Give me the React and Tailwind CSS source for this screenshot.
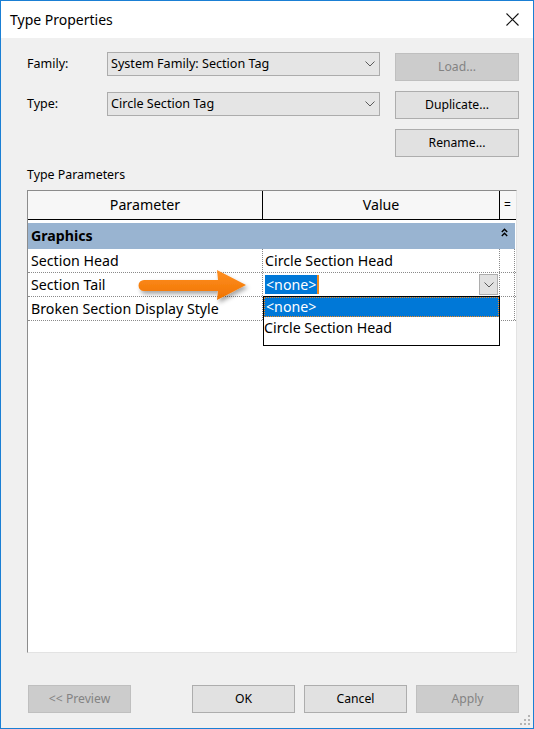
import React from "react";

function Chevron({ className = "" }) {
  return (
    <svg width="10" height="6" viewBox="0 0 10 6" className={className}>
      <path d="M0.5 0.5 L5 5 L9.5 0.5" fill="none" stroke="#5a5a5a" strokeWidth="1" />
    </svg>
  );
}

function Combo({ text, className = "" }) {
  return (
    <div
      className={
        "w-[273px] h-[24px] bg-[#e5e5e5] border border-[#acacac] flex items-center justify-between pl-[3px] pr-[4px] text-[12.6px] " +
        className
      }
    >
      <span>{text}</span>
      <Chevron />
    </div>
  );
}

function Btn({ children, disabled, className = "" }) {
  return (
    <div
      className={
        "h-[28px] border flex items-center justify-center text-[12.2px] " +
        (disabled
          ? "bg-[#cccccc] border-[#bfbfbf] text-[#838383] "
          : "bg-[#e1e1e1] border-[#adadad] text-black ") +
        className
      }
    >
      {children}
    </div>
  );
}

function Row({ name, children }) {
  return (
    <div className="h-[24px] flex border-b border-dotted border-[#8a8a8a] text-[14.2px]">
      <div className="w-[235px] border-r border-dotted border-[#8a8a8a] flex items-center pl-[3px]">
        {name}
      </div>
      <div className="w-[237px] border-r border-dotted border-[#8a8a8a] flex items-center pl-[2px] relative">
        {children}
      </div>
      <div className="w-[15px] border-r border-dotted border-[#8a8a8a]"></div>
    </div>
  );
}

export default function App() {
  return (
    <div className="w-[534px] h-[729px] border border-[#1a7fd4] bg-[#f0f0f0] flex flex-col relative font-['Noto_Sans',sans-serif] text-black overflow-hidden">
      {/* Title bar */}
      <div className="h-[37px] bg-white flex items-center justify-between pl-[9px] pr-[14px] shrink-0">
        <span className="text-[14px] leading-none">Type Properties</span>
        <svg width="13" height="13" viewBox="0 0 13 13">
          <path d="M0.5 0.5 L12.5 12.5 M12.5 0.5 L0.5 12.5" stroke="#111" strokeWidth="1.1" />
        </svg>
      </div>

      {/* Body */}
      <div className="flex-1 flex flex-col pl-[26px] pr-[14px] pt-[14px]">
        <div className="flex items-start h-[29px]">
          <div className="w-[80px] h-[24px] flex items-center text-[12.5px]">Family:</div>
          <Combo text="System Family: Section Tag" />
          <Btn disabled className="w-[124px] ml-[15px] mt-[1px]">Load...</Btn>
        </div>
        <div className="flex items-start h-[28px] mt-[10px]">
          <div className="w-[80px] h-[24px] mt-[1px] flex items-center text-[12.5px]">Type:</div>
          <Combo text="Circle Section Tag" className="mt-[1px]" />
          <Btn className="w-[124px] ml-[15px]">Duplicate...</Btn>
        </div>
        <div className="flex justify-end h-[28px] mt-[10px]">
          <Btn className="w-[124px]">Rename...</Btn>
        </div>
        <div className="mt-[10px] h-[16px] leading-[16px] text-[12.4px]">Type Parameters</div>

        {/* Table */}
        <div className="mt-[7px] w-[490px] h-[463px] border border-t-[#8c8c8c] border-l-[#8c8c8c] border-r-[#e3e3e3] border-b-[#e3e3e3] bg-white relative shrink-0">
          <div className="h-[29px] flex border-b border-black bg-[#f7f7f7] text-[14.2px]">
            <div className="w-[235px] border-r border-black flex items-center justify-center">Parameter</div>
            <div className="w-[237px] border-r border-black flex items-center justify-center">Value</div>
            <div className="w-[15px] flex items-center justify-center text-[12px]">=</div>
          </div>
          <div className="h-[3px]"></div>
          <div className="h-[26px] w-[487px] bg-[#99b4d1] flex items-center justify-between pl-[3px] pr-[7px]">
            <span className="text-[14.2px] font-bold">Graphics</span>
            <svg width="7" height="9" viewBox="0 0 7 9" className="-mt-[8px]">
              <path d="M0.8 4 L3.5 1.3 L6.2 4 M0.8 8 L3.5 5.3 L6.2 8" fill="none" stroke="#000" strokeWidth="1.4" />
            </svg>
          </div>
          <Row name="Section Head">Circle Section Head</Row>
          <Row name="Section Tail">
            <span className="h-[19px] flex items-center bg-[#0078d7] text-white pl-[1px] pr-[1px] border-r-2 border-[#f28a1e]">
              &lt;none&gt;
            </span>
            <div className="absolute right-[1px] top-[1px] w-[19px] h-[21px] bg-[#e1e1e1] border border-[#adadad] flex items-center justify-center">
              <Chevron />
            </div>
          </Row>
          <Row name="Broken Section Display Style"></Row>

          {/* Dropdown list */}
          <div className="absolute left-[235px] top-[105px] w-[237px] h-[50px] bg-white border border-black text-[14.2px]">
            <div className="h-[20px] bg-[#0078d7] text-white flex items-center pl-[1px] border border-dotted border-[#f28a1e]">
              &lt;none&gt;
            </div>
            <div className="h-[21px] flex items-center">Circle Section Head</div>
          </div>

          {/* Arrow */}
          <svg width="125" height="44" viewBox="0 0 125 44" className="absolute left-[102px] top-[71px] overflow-visible">
            <defs>
              <linearGradient id="og" x1="0" y1="0" x2="0" y2="1">
                <stop offset="0" stopColor="#ff9022" />
                <stop offset="1" stopColor="#f07300" />
              </linearGradient>
              <filter id="sh" x="-20%" y="-40%" width="140%" height="180%">
                <feDropShadow dx="2" dy="3" stdDeviation="2" floodColor="#000" floodOpacity="0.35" />
              </filter>
            </defs>
            <path
              d="M14 18 L88 18 L87 8 L116 23 L87 38 L88 29 L14 29 A5.5 5.5 0 0 1 14 18 Z"
              fill="url(#og)"
              filter="url(#sh)"
            />
          </svg>
        </div>

        {/* Bottom buttons */}
        <div className="mt-[32px] flex justify-between h-[28px]">
          <Btn disabled className="w-[103px] ml-[1px]">&lt;&lt; Preview</Btn>
          <div className="flex gap-[9px]">
            <Btn className="w-[103px]">OK</Btn>
            <Btn className="w-[103px]">Cancel</Btn>
            <Btn disabled className="w-[103px]">Apply</Btn>
          </div>
        </div>
      </div>

      {/* Resize grip */}
      <svg width="12" height="12" viewBox="0 0 12 12" className="absolute right-[1px] bottom-[1px]">
        <rect x="8" y="0" width="2" height="2" fill="#b4b4b4" />
        <rect x="4" y="4" width="2" height="2" fill="#b4b4b4" />
        <rect x="8" y="4" width="2" height="2" fill="#b4b4b4" />
        <rect x="0" y="8" width="2" height="2" fill="#b4b4b4" />
        <rect x="4" y="8" width="2" height="2" fill="#b4b4b4" />
        <rect x="8" y="8" width="2" height="2" fill="#b4b4b4" />
      </svg>
    </div>
  );
}
